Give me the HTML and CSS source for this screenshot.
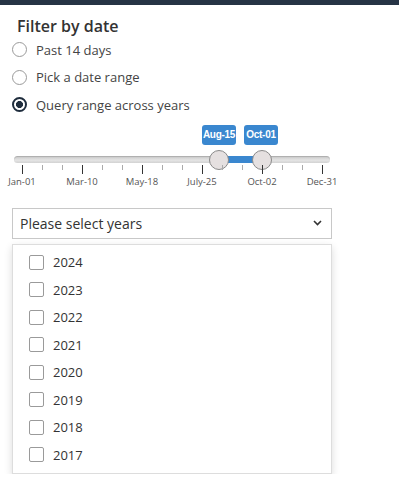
FILE: index.html
```html
<!DOCTYPE HTML>
<html>
<head>
<meta charset="utf-8">
<title>Filter by date</title>
<link rel="stylesheet" href="styles.css">
</head>
<body>
<div class="topbar"></div>
<div class="panel">
	<h3 class="title">Filter by date</h3>
	<label class="radio"><span class="dot"></span>Past 14 days</label>
	<label class="radio"><span class="dot"></span>Pick a date range</label>
	<label class="radio on"><span class="dot"></span>Query range across years</label>

	<div class="slider">
		<div class="tip" style="left:188px">Aug-15</div>
		<div class="tip" style="left:230px">Oct-01</div>
		<div class="track"></div>
		<div class="range" style="left:205px;width:43px"></div>
		<div class="handle" style="left:195px"></div>
		<div class="handle" style="left:238px"></div>
		<div class="ticks">
			<i class="big"></i><i></i><i></i>
			<i class="big"></i><i></i><i></i>
			<i class="big"></i><i></i><i></i>
			<i class="big"></i><i></i><i></i>
			<i class="big"></i><i></i><i></i>
			<i class="big"></i>
		</div>
		<div class="labels">
			<span>Jan-01</span><span>Mar-10</span><span>May-18</span><span>July-25</span><span>Oct-02</span><span>Dec-31</span>
		</div>
	</div>

	<div class="select">
		<span>Please select years</span>
		<svg width="9" height="6" viewBox="0 0 9 6"><path d="M1 1l3.5 3.5L8 1" fill="none" stroke="#333" stroke-width="1.6"/></svg>
	</div>
	<ul class="years">
		<li><span class="box"></span>2024</li>
		<li><span class="box"></span>2023</li>
		<li><span class="box"></span>2022</li>
		<li><span class="box"></span>2021</li>
		<li><span class="box"></span>2020</li>
		<li><span class="box"></span>2019</li>
		<li><span class="box"></span>2018</li>
		<li><span class="box"></span>2017</li>
	</ul>
</div>
</body>
</html>
```
FILE: styles.css
```css
body{
	margin:0;
	font-family:"Open Sans","Noto Sans",sans-serif;
	color:#333;
	background:#fff;}

.topbar{
	height:5px;
	background:#263445;}

.panel{
	padding:0 12px;}

.title{
	margin:11px 0 0 5px;
	font-size:16px;
	line-height:20px;
	font-weight:600;
	color:#333;}

.radio{
	display:flex;
	align-items:center;
	height:27.5px;
	font-size:13px;
	color:#444;}
.radio .dot{
	box-sizing:border-box;
	width:15px;
	height:15px;
	margin-right:9px;
	border:1.5px solid #9a9a9a;
	border-radius:50%;}
.radio.on .dot{
	border:2px solid #1f2d3d;
	background:radial-gradient(circle,#1f2d3d 0,#1f2d3d 3.2px,#fff 3.8px);}

.slider{
	position:relative;
	height:71px;
	margin-left:2px;
	width:316px;}
.track{
	position:absolute;
	left:0;
	right:0;
	top:37px;
	height:7px;
	border-radius:4px;
	background:linear-gradient(#c8c8c8,#e4e4e4 60%,#d2d2d2);
	box-shadow:inset 0 1px 1px rgba(0,0,0,.15);}
.range{
	position:absolute;
	top:37px;
	height:7px;
	background:#3a87cf;}
.handle{
	position:absolute;
	top:31px;
	box-sizing:border-box;
	width:20px;
	height:20px;
	border-radius:50%;
	border:1px solid #8a8a8a;
	background:#e5e0e0;}
.tip{
	position:absolute;
	top:6px;
	width:34px;
	height:20px;
	line-height:20px;
	border-radius:3px;
	background:#3a87cf;
	color:#fff;
	text-align:center;
	font-family:"Liberation Sans",Arial,sans-serif;
	font-weight:bold;
	font-size:10px;
	letter-spacing:-.3px;}
.ticks{
	position:absolute;
	top:46px;
	left:8px;
	width:301px;
	display:flex;
	justify-content:space-between;
	align-items:flex-start;}
.ticks i{
	width:1px;
	height:5px;
	background:#aaa;}
.ticks i.big{
	height:9px;
	background:#333;}
.labels{
	position:absolute;
	top:57px;
	left:-22px;
	display:flex;}
.labels span{
	width:60px;
	text-align:center;
	font-size:9.5px;
	line-height:12px;
	color:#555;}

.select{
	box-sizing:border-box;
	width:320px;
	display:flex;
	align-items:center;
	justify-content:space-between;
	height:31px;
	margin-top:18px;
	padding:0 9px 0 7px;
	border:1px solid #c8c8c8;
	font-size:14px;
	color:#333;}

.years{
	box-sizing:border-box;
	width:320px;
	list-style:none;
	margin:5px 0 0;
	padding:4px 0 4px 16px;
	border:1px solid #ddd;
	box-shadow:0 3px 8px rgba(0,0,0,.14);}
.years li{
	display:flex;
	align-items:center;
	height:27.5px;
	font-size:13px;
	color:#333;}
.years .box{
	box-sizing:border-box;
	width:15px;
	height:15px;
	margin-right:9px;
	border:1.5px solid #9a9a9a;
	border-radius:2px;}
```
